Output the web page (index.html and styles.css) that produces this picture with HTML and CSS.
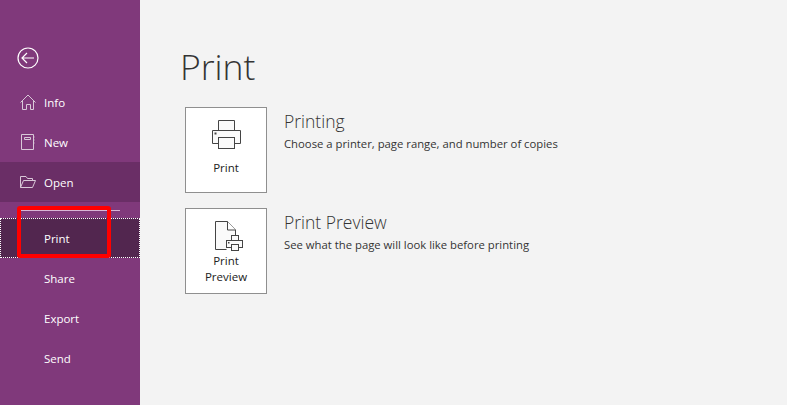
FILE: index.html
```html
<!DOCTYPE html>
<html lang="en">
<head>
  <meta charset="UTF-8" />
  <title>Print</title>
  <link rel="stylesheet" href="styles.css">
</head>
<body>
  <div class="sidebar">
    <div class="back">
      <svg width="22" height="22" viewBox="0 0 22 22" fill="none" stroke="#fff" stroke-width="1.2">
        <circle cx="11" cy="11" r="10" />
        <path d="M5 11H17M10 6L5 11L10 16" />
      </svg>
    </div>

    <div class="nav-item">
      <svg class="nav-icon" width="16" height="16" viewBox="0 0 16 16" fill="none" stroke="#d9c8d8">
        <path d="M0.5 8.5L8 1L15.5 8.5M2.5 7V15.5H6.5V10.5H10.5V15.5H13.5V7" />
      </svg>
      Info
    </div>
    <div class="nav-item">
      <svg class="nav-icon" width="16" height="16" viewBox="0 0 16 16" fill="none" stroke="#d9c8d8">
        <path d="M1.5 0.5H13.5V15.5H1.5ZM4.5 3.5H10.5V5.5H4.5ZM13.5 3H14.5M13.5 6H14.5M13.5 9H14.5" />
      </svg>
      New
    </div>
    <div class="nav-item open">
      <svg class="nav-icon" width="16" height="16" viewBox="0 0 16 16" fill="none" stroke="#d9c8d8">
        <path d="M0.5 13.5V2.5H6L7.5 4.5H12.5V6.5M0.5 13.5L3.5 6.5H15.5L12.5 13.5Z" />
      </svg>
      Open
    </div>

    <div class="divider"></div>

    <div class="nav-item selected">Print</div>
    <div class="nav-item">Share</div>
    <div class="nav-item">Export</div>
    <div class="nav-item">Send</div>

    <!-- red highlight over the print item -->
    <div class="highlight"></div>
  </div>

  <div class="main">
    <h1>Print</h1>

    <div class="option">
      <div class="option-btn">
        <svg class="btn-icon" width="30" height="30" viewBox="0 0 30 30" fill="none" stroke="#444">
          <path d="M7.5 11.5V1.5H23.5V11.5" fill="#fafafa" />
          <path d="M7.5 24.5H1.5V11.5H29.5V24.5H23.5" fill="#fafafa" />
          <rect x="7.5" y="18.5" width="16" height="11" fill="#fafafa" />
          <rect x="3.5" y="13.5" width="2" height="2" fill="#444" stroke="none" />
        </svg>
        <span>Print</span>
      </div>
      <div class="option-text">
        <div class="option-title">Printing</div>
        <div class="option-desc">Choose a printer, page range, and number of copies</div>
      </div>
    </div>

    <div class="option">
      <div class="option-btn preview">
        <svg class="btn-icon" width="34" height="32" viewBox="0 0 34 32" fill="none" stroke="#444">
          <path d="M17.5 29.5H6.5V1.5H18.5L26.5 10V15.5" fill="#fafafa" />
          <path d="M18.5 1.5V10H26.5" fill="#fff" />
          <rect x="22.5" y="15.5" width="7" height="5" fill="#fafafa" />
          <rect x="17.5" y="20.5" width="16" height="7" fill="#fafafa" />
          <rect x="22.5" y="24.5" width="7" height="6" fill="#fafafa" />
          <rect x="19" y="22" width="1.5" height="1.5" fill="#444" stroke="none" />
        </svg>
        <span>Print<br>Preview</span>
      </div>
      <div class="option-text">
        <div class="option-title">Print Preview</div>
        <div class="option-desc">See what the page will look like before printing</div>
      </div>
    </div>
  </div>
</body>
</html>
```

FILE: styles.css
```css
html, body {
  height: 100%;
}

body {
  margin: 0;
  display: flex;
  overflow: hidden;
  background: #f3f3f3;
  font-family: "Open Sans", "Noto Sans", sans-serif;
  color: #333;
}

.sidebar {
  position: relative;
  width: 140px;
  flex-shrink: 0;
  padding-top: 47px;
  box-sizing: border-box;
  background: #80397b;
  color: #fff;
}

.back {
  height: 35px;
  padding-left: 17px;
}

.nav-item {
  display: flex;
  align-items: center;
  height: 40px;
  padding-left: 44px;
  position: relative;
  font-size: 11.5px;
}

.nav-icon {
  position: absolute;
  left: 20px;
  top: 12px;
}

.open {
  background: #6a2e66;
}

.divider {
  height: 1px;
  margin: 8px 20px 7px;
  background: #d9b6d6;
}

.selected {
  background: #52264f;
  outline: 1px dotted #fff;
  outline-offset: -1px;
}

.highlight {
  position: absolute;
  left: 17px;
  top: 206px;
  width: 86px;
  height: 44px;
  border: 4px solid #ff0000;
  border-radius: 3px;
}

.main {
  flex: 1;
  padding: 38px 0 0 40px;
}

h1 {
  margin: 0 0 13px;
  font-size: 35.5px;
  line-height: 56px;
  font-weight: 300;
}

.option {
  display: flex;
  margin: 0 0 15px 5px;
}

.option-btn {
  display: flex;
  flex-direction: column;
  align-items: center;
  width: 82px;
  height: 86px;
  padding-top: 11px;
  box-sizing: border-box;
  margin-right: 17px;
  background: #fff;
  border: 1px solid #8f8f8f;
  font-size: 11.5px;
  line-height: 16px;
  text-align: center;
  color: #222;
}

.btn-icon {
  margin-bottom: 11px;
  flex-shrink: 0;
}

.preview .btn-icon {
  margin-bottom: 1px;
}

.option-text {
  padding-top: 1px;
}

.option-title {
  font-size: 17.5px;
  line-height: 26px;
  font-weight: 300;
}

.option-desc {
  margin-top: 2px;
  font-size: 11.3px;
  line-height: 16px;
}
```
